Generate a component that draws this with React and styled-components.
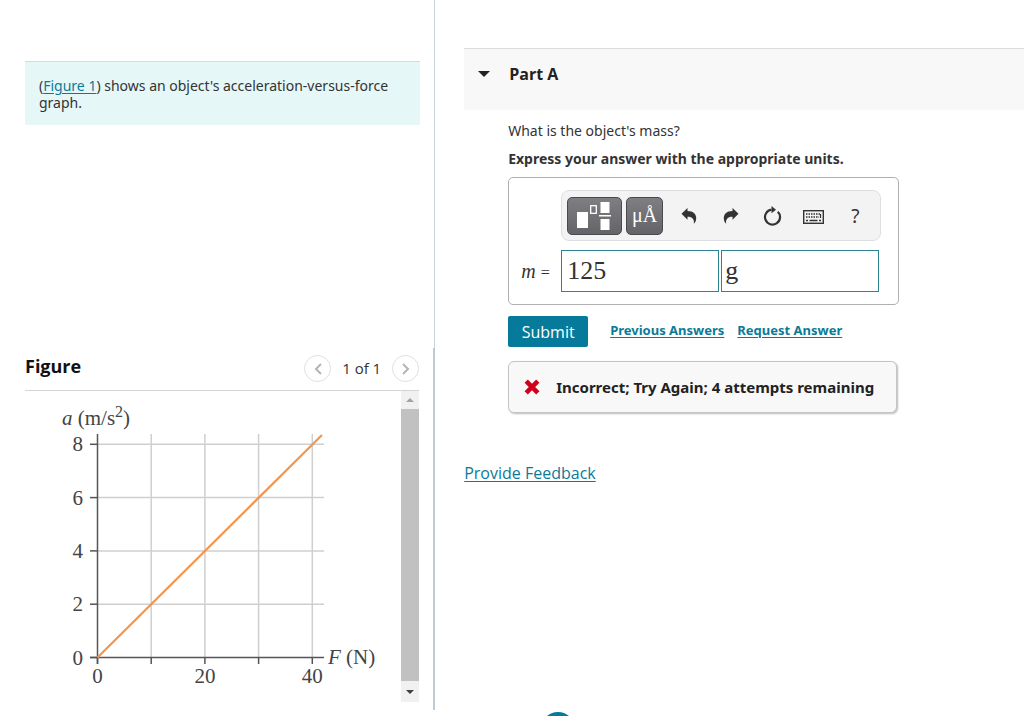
import React, { useState } from "react";
import styled, { createGlobalStyle } from "styled-components";

const GlobalStyle = createGlobalStyle`
  * {
    box-sizing: border-box;
  }
  body {
    margin: 0;
    background: #fff;
    color: #333;
    font-family: "Noto Sans", "Open Sans", sans-serif;
    font-size: 14px;
  }
  button, input {
    font-family: inherit;
    color: inherit;
  }
`;

const Page = styled.div`
  display: flex;
  height: 100vh;
  overflow: hidden;
`;

const LeftColumn = styled.div`
  flex: 0 0 42.5%;
  display: flex;
  flex-direction: column;
  padding-bottom: 6px;
`;

const PromptPane = styled.section`
  flex: 1;
  padding: 61px 14px 0 25px;
  border-right: 1px solid #cbd3da;
`;

const Prompt = styled.p`
  margin: 0;
  padding: 15px 14px 14px;
  border-top: 1px solid #cfdfdf;
  background: #e6f7f8;
  line-height: 17px;
`;

const Link = styled.a`
  color: #0b7a97;
  font-size: ${(props) => props.$size || 14}px;
  font-weight: ${(props) => (props.$bold ? 700 : 400)};
  text-underline-offset: 2px;
`;

const FigurePane = styled.section`
  padding: 7px 14px 8px 25px;
  border-right: 2px solid #bccbd6;
`;

const FigureHeader = styled.header`
  display: flex;
  align-items: flex-start;
  justify-content: space-between;
  padding-bottom: 8px;
  border-bottom: 1px solid #d4d4d4;
`;

const FigureTitle = styled.h2`
  margin: 0;
  color: #111;
  font-family: "Open Sans", sans-serif;
  font-size: 18px;
  line-height: 22px;
`;

const Pager = styled.div`
  display: flex;
  align-items: center;
  gap: 11px;
  font-family: "Open Sans", sans-serif;
  font-size: 15px;
  line-height: 27px;
`;

const PagerButton = styled.button`
  display: flex;
  align-items: center;
  justify-content: center;
  width: 27px;
  height: 27px;
  padding: 0;
  border: 1px solid #e0e0e0;
  border-radius: 50%;
  background: #fff;
  color: #b5b5b5;
`;

const FigureBody = styled.div`
  display: flex;
  justify-content: space-between;
`;

const ScrollBar = styled.div`
  display: flex;
  flex-direction: column;
  width: 18px;
  background: #c1c1c1;
`;

const ScrollButton = styled.button`
  display: flex;
  align-items: center;
  justify-content: center;
  height: ${(props) => props.$height}px;
  margin-top: ${(props) => (props.$end ? "auto" : 0)};
  padding: 0;
  border: 0;
  background: #f1f1f1;
  color: ${(props) => (props.$end ? "#404040" : "#a3a3a3")};
`;

const RightColumn = styled.main`
  flex: 1;
  min-width: 0;
  display: flex;
  flex-direction: column;
  padding: 48px 0 0 29px;
`;

const PartHeader = styled.header`
  display: flex;
  gap: 19px;
  padding: 14px 14px 25px;
  border-top: 1px solid #dcdcdc;
  background: #f8f8f8;
`;

const PartToggle = styled.button`
  display: flex;
  align-items: center;
  padding: 0;
  border: 0;
  background: none;
  color: #222;
`;

const PartTitle = styled.h1`
  margin: 0;
  color: #222;
  font-family: "Open Sans", sans-serif;
  font-size: 16px;
  line-height: 22px;
`;

const PartBody = styled.form`
  padding: 11px 24px 0 44px;
`;

const Question = styled.p`
  margin: 0 0 8px;
  font-weight: ${(props) => (props.$bold ? 700 : 400)};
  line-height: 20px;
`;

const AnswerBox = styled.div`
  display: grid;
  grid-template-columns: 40px 320px;
  width: fit-content;
  row-gap: 9px;
  padding: 12px 17px 12px 12px;
  border: 1px solid #b0b0b3;
  border-radius: 5px;
`;

const Toolbar = styled.div`
  grid-column: 2;
  display: flex;
  align-items: center;
  height: 51px;
  padding: 0 4px 0 5px;
  border: 1px solid #dcdfe2;
  border-radius: 8px;
  background: #f3f3f4;
`;

const MathButton = styled.button`
  display: flex;
  align-items: center;
  justify-content: center;
  width: ${(props) => props.$width}px;
  height: 38px;
  margin-right: 4px;
  padding: 0;
  border: 1px solid #4a4a4e;
  border-radius: 5px;
  background: linear-gradient(#7e7e83, #646468);
  color: #fff;
  font-family: "Liberation Serif", serif;
  font-size: 20px;
`;

const ToolButtons = styled.div`
  flex: 1;
  display: flex;
  justify-content: space-around;
  padding-left: 1px;
`;

const ToolButton = styled.button`
  display: flex;
  align-items: center;
  justify-content: center;
  width: 28px;
  height: 28px;
  padding: 0;
  border: 0;
  background: none;
  color: #333;
  font-size: 19px;
`;

const AnswerLabel = styled.label`
  align-self: center;
  font-family: "Liberation Serif", serif;
  font-size: 16px;
`;

const Variable = styled.i`
  margin-right: 5px;
  font-size: 20px;
`;

const AnswerFields = styled.div`
  display: flex;
  gap: 2px;
  padding-right: 2px;
`;

const AnswerInput = styled.input`
  flex: 1 1 50%;
  min-width: 0;
  height: 42px;
  padding: 0 ${(props) => (props.$unit ? 3 : 5)}px;
  border: 1px solid #2c8490;
  border-radius: 0;
  background: #fff;
  font-family: "Liberation Serif", serif;
  font-size: 26px;
`;

const Actions = styled.div`
  display: flex;
  align-items: flex-start;
  gap: 13px;
  margin: 11px 0 14px;
  line-height: 28px;
`;

const SubmitButton = styled.button`
  width: 80px;
  height: 31px;
  margin-right: 9px;
  padding: 0;
  border: 0;
  border-radius: 2px;
  background: #057a9a;
  color: #fff;
  font-family: "Open Sans", sans-serif;
  font-size: 16px;
`;

const Feedback = styled.div`
  display: flex;
  align-items: center;
  gap: 16px;
  width: fit-content;
  height: 52px;
  padding: 0 22px 0 15px;
  border: 1px solid #c4c4c4;
  border-radius: 6px;
  background: #f8f8f8;
  box-shadow: 1px 1px 2px #bbb;
  color: #222;
  font-size: 15px;
  font-weight: 700;
`;

const FeedbackLink = styled.div`
  margin-top: 49px;
  font-family: "Open Sans", sans-serif;
  line-height: 22px;
`;

const BottomEdge = styled.footer`
  flex: 0 0 4px;
  margin-top: auto;
  padding-left: 77px;
  overflow: hidden;
`;

const HelpButton = styled.button`
  display: block;
  width: 34px;
  height: 34px;
  border: 0;
  border-radius: 50%;
  background: #057a9a;
`;

const Triangle = ({ up, width = 8, height = 4 }) => (
  <svg width={width} height={height} viewBox="0 0 8 4" preserveAspectRatio="none" fill="currentColor">
    <path d={up ? "M0 4L4 0L8 4Z" : "M0 0L8 0L4 4Z"} />
  </svg>
);

const Chevron = ({ right }) => (
  <svg width="8" height="12" viewBox="0 0 8 12" fill="none" stroke="currentColor" strokeWidth="2">
    <path d={right ? "M1 1L6 6L1 11" : "M7 1L2 6L7 11"} />
  </svg>
);

const TemplateIcon = () => (
  <svg width="35" height="28" viewBox="0 0 35 28" fill="#fff">
    <rect x="0" y="10" width="11" height="16" />
    <rect x="13.700" y="3.700" width="5.600" height="7.600" fill="none" stroke="#fff" strokeWidth="1.300" />
    <rect x="23.500" y="0" width="9" height="11" />
    <rect x="22" y="13" width="12" height="1.500" />
    <rect x="23.500" y="17" width="9" height="11" />
  </svg>
);

const ArrowIcon = ({ flip }) => (
  <svg width="16" height="16" viewBox="0 0 16 16" fill="currentColor">
    <path
      transform={flip ? "translate(16 0) scale(-1 1)" : undefined}
      d="M0.500 5.800L6.500 0V3C12.500 3 15.500 6.500 15.200 10.500C15 13 14.200 14.600 12.800 15.800C13.600 11.500 11.500 8.800 6.500 8.800V11.800Z"
    />
  </svg>
);

const ResetIcon = () => (
  <svg width="20" height="20" viewBox="0 0 20 20" fill="none">
    <path d="M15.800 5.800A7.500 7.500 0 1 1 9.500 3.700" stroke="currentColor" strokeWidth="2.200" />
    <path d="M9.500 0L14 3.700L9.500 7.200Z" fill="currentColor" />
  </svg>
);

const KeyboardIcon = () => (
  <svg width="21" height="16" viewBox="0 -2 21 16" fill="none" stroke="currentColor">
    <rect x="0.700" y="0.700" width="19.600" height="12.600" strokeWidth="1.400" />
    <path d="M3 4H18M3 7H16" strokeWidth="1.600" strokeDasharray="1.500 1" />
    <path d="M3 10.500H5M6.500 10.500H14.500M16 10.500H18" strokeWidth="1.500" />
    <path d="M17.500 4V8" strokeWidth="1.200" />
  </svg>
);

const CrossIcon = () => (
  <svg width="16" height="16" viewBox="0 0 16 16" stroke="#d0021b" strokeWidth="4.600">
    <path d="M2.200 2.200L13.800 13.800M13.800 2.200L2.200 13.800" />
  </svg>
);

const X_TICKS = [0, 10, 20, 30, 40];
const Y_TICKS = [0, 2, 4, 6, 8];
const xPos = (force) => 72.5 + force * 5.37;
const yPos = (acceleration) => 266.5 - acceleration * 26.65;

const Graph = () => (
  <svg width="370" height="311" viewBox="0 0 370 311" fontFamily="Liberation Serif, serif" fontSize="21" fill="#444">
    <g stroke="#cfcfcf" strokeWidth="1.500">
      {X_TICKS.slice(1).map((x) => (
        <line key={x} x1={xPos(x)} x2={xPos(x)} y1="43" y2="266" />
      ))}
      {Y_TICKS.slice(1).map((y) => (
        <line key={y} x1="72" x2="299" y1={yPos(y)} y2={yPos(y)} />
      ))}
    </g>
    <g stroke="#555" strokeWidth="1.500">
      <line x1="72.500" x2="72.500" y1="43" y2="273" />
      <line x1="65" x2="299" y1="266.500" y2="266.500" />
      {X_TICKS.map((x) => (
        <line key={x} x1={xPos(x)} x2={xPos(x)} y1="266" y2="273" />
      ))}
      {Y_TICKS.map((y) => (
        <line key={y} x1="65" x2="72" y1={yPos(y)} y2={yPos(y)} />
      ))}
    </g>
    <line x1="72.500" y1="266.500" x2="297" y2="44" stroke="#f5954b" strokeWidth="2.200" />
    {Y_TICKS.map((y) => (
      <text key={y} x="58" y={yPos(y) + 7} textAnchor="end">{y}</text>
    ))}
    {[0, 20, 40].map((x) => (
      <text key={x} x={xPos(x)} y="292" textAnchor="middle">{x}</text>
    ))}
    <text x="37" y="34">
      <tspan fontStyle="italic">a</tspan> (m/s<tspan fontSize="16" dy="-8">2</tspan><tspan dy="8">)</tspan>
    </text>
    <text x="303" y="273">
      <tspan fontStyle="italic">F</tspan> (N)
    </text>
  </svg>
);

const App = () => {
  const [value, setValue] = useState("125");
  const [unit, setUnit] = useState("g");

  return (
    <>
      <GlobalStyle />
      <Page>
        <LeftColumn>
          <PromptPane>
            <Prompt>
              (<Link href="#figure">Figure 1</Link>) shows an object's acceleration-versus-force graph.
            </Prompt>
          </PromptPane>
          <FigurePane id="figure">
            <FigureHeader>
              <FigureTitle>Figure</FigureTitle>
              <Pager>
                <PagerButton aria-label="Previous figure"><Chevron /></PagerButton>
                1 of 1
                <PagerButton aria-label="Next figure"><Chevron right /></PagerButton>
              </Pager>
            </FigureHeader>
            <FigureBody>
              <Graph />
              <ScrollBar>
                <ScrollButton $height={18} aria-label="Scroll up"><Triangle up /></ScrollButton>
                <ScrollButton $height={21} $end aria-label="Scroll down"><Triangle /></ScrollButton>
              </ScrollBar>
            </FigureBody>
          </FigurePane>
        </LeftColumn>
        <RightColumn>
          <PartHeader>
            <PartToggle aria-label="Toggle Part A"><Triangle width={12} height={6} /></PartToggle>
            <PartTitle>Part A</PartTitle>
          </PartHeader>
          <PartBody onSubmit={(e) => e.preventDefault()}>
            <Question>What is the object's mass?</Question>
            <Question $bold>Express your answer with the appropriate units.</Question>
            <AnswerBox>
              <Toolbar>
                <MathButton type="button" $width={55} aria-label="Templates"><TemplateIcon /></MathButton>
                <MathButton type="button" $width={37}>μÅ</MathButton>
                <ToolButtons>
                  <ToolButton type="button" aria-label="Undo"><ArrowIcon /></ToolButton>
                  <ToolButton type="button" aria-label="Redo"><ArrowIcon flip /></ToolButton>
                  <ToolButton type="button" aria-label="Reset"><ResetIcon /></ToolButton>
                  <ToolButton type="button" aria-label="Keyboard shortcuts"><KeyboardIcon /></ToolButton>
                  <ToolButton type="button">?</ToolButton>
                </ToolButtons>
              </Toolbar>
              <AnswerLabel htmlFor="value"><Variable>m</Variable>=</AnswerLabel>
              <AnswerFields>
                <AnswerInput id="value" value={value} onChange={(e) => setValue(e.target.value)} />
                <AnswerInput $unit aria-label="Units" value={unit} onChange={(e) => setUnit(e.target.value)} />
              </AnswerFields>
            </AnswerBox>
            <Actions>
              <SubmitButton type="submit">Submit</SubmitButton>
              <Link href="#previous" $bold $size={13}>Previous Answers</Link>
              <Link href="#request" $bold $size={13}>Request Answer</Link>
            </Actions>
            <Feedback>
              <CrossIcon />
              Incorrect; Try Again; 4 attempts remaining
            </Feedback>
          </PartBody>
          <FeedbackLink>
            <Link href="#feedback" $size={16}>Provide Feedback</Link>
          </FeedbackLink>
          <BottomEdge>
            <HelpButton aria-label="Help" />
          </BottomEdge>
        </RightColumn>
      </Page>
    </>
  );
};

export default App;
